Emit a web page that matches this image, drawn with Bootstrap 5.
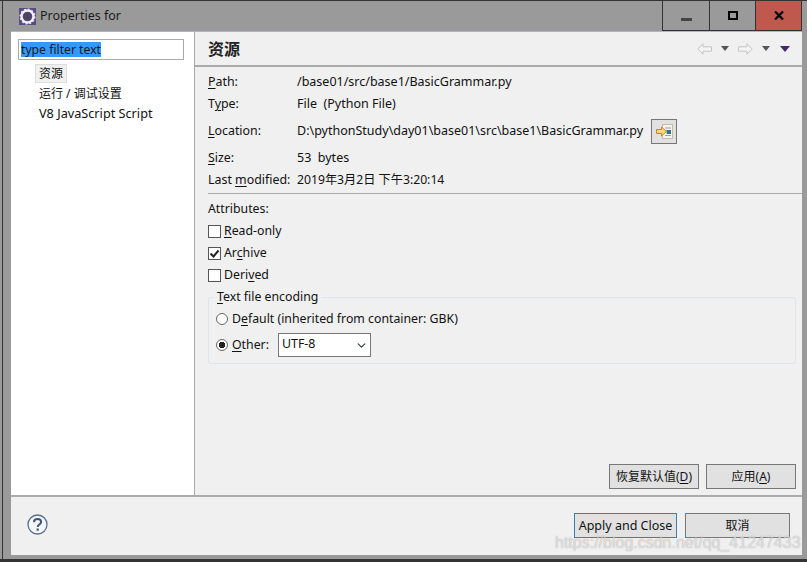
<!DOCTYPE html>
<html lang="zh">
<head>
<meta charset="utf-8">
<title>Properties for</title>
<link href="https://cdn.jsdelivr.net/npm/bootstrap@5.3.0/dist/css/bootstrap.min.css" rel="stylesheet">
<style>
html,body{height:100%;margin:0;overflow:hidden}
body{background:#9a9a9a;font-family:"Noto Sans","Noto Sans CJK SC",sans-serif;font-size:12.5px;color:#111;line-height:16px}
.win-shell{width:807px;height:562px;position:relative;border-top:1px solid #333;border-bottom:3px solid #333}
.win-edge{position:absolute;left:2px;top:0;bottom:0;width:1px;background:#333}
.title-strip{height:30px;padding-left:19px}
.title-name{font-size:12.5px;margin-left:4px;color:#1c1c1c}
.win-btns{margin-right:5px;height:30px;border:1px solid #333;border-top:0}
.win-btn{width:46px;height:100%;border-left:1px solid #333}
.win-btn:first-child{border-left:0}
.win-close{background:#c0594d}
.client{margin:0 5px 0 11px;height:524px;background:#f0f0f0;border-top:1px solid #a9b7c6}
.top-area{height:463px}
.side{width:184px;background:#fff;border-right:1px solid #a8a8a8;padding:7px 10px 0 7px}
.filter-box{height:21px;border:1px solid #aaa;border-radius:0;padding:2px 2px;font-size:12.2px;line-height:15px;color:#1a1a1a;background:#fff}
.filter-sel{background:#3399ff;display:inline-block;height:15px}
.tree{padding-left:17px;margin-top:4px;font-size:12px}
.tree-row{height:20px;line-height:20px;padding-left:4px;white-space:nowrap}
.tree-latin{font-size:12.7px;line-height:18px}
.tree-on{display:inline-block;margin-left:-4px;padding:0 3px;height:19px;line-height:17px;background:#f0f0f0;border:1px solid #ddd}
.main-pane{min-width:0}
.pane-head{height:35px;border-bottom:2px solid #aaa;padding:0 12px 0 13px}
.pane-title{font-size:16px;font-weight:700;color:#222}
.nav-arrows{gap:9px}
.nav-last{margin-left:1px}
.pane-body{padding:4px 6px 6px 13px}
.prop-row{height:22px}
.prop-row.tall{height:32px}
.prop-key{width:89px;flex:none;white-space:nowrap;font-size:12.4px}
.date-val{font-size:12.2px}
.loc-btn{width:26px;height:25px;border:1px solid #777;background:#e1e1e1;margin-left:8px;padding:0;border-radius:0}
.sep-line{border-top:1px solid #aaa;margin:2px -6px 4px 0;opacity:1}
.attr-row{height:22px;font-size:12.3px}
.attr-row .form-check-input{width:13px;height:13px;margin:0 3px 0 0;border:1px solid #555;border-radius:0;background-color:#fff;float:none}
.attr-row .form-check-input:checked{background-color:#fff;border-color:#555;background-image:url("data:image/svg+xml,%3csvg xmlns='http://www.w3.org/2000/svg' viewBox='0 0 13 13'%3e%3cpath d='M2.5 6.5l3 3 5-6' fill='none' stroke='%23222' stroke-width='2'/%3e%3c/svg%3e");background-size:13px}
.enc-box{border:1px solid #dde4ec;border-radius:3px;margin:11px 0 0;padding:10px 8px 6px 7px;height:67px;position:relative;font-size:12.3px}
.enc-legend{position:absolute;left:5px;top:-9px;background:#f0f0f0;padding:0 3px;line-height:16px}
.enc-radio{width:12px;height:12px;margin:0 4px 0 0;border:1px solid #666;background:#fff;float:none}
.enc-radio:checked{background-color:#fff;border-color:#666;background-image:radial-gradient(circle,#222 0,#222 3px,transparent 3.5px)}
.enc-row{height:22px}
.enc-row.two{height:30px}
.enc-select{width:93px;height:24px;border:1px solid #777;border-radius:0;margin-left:9px;padding:0 0 2px 3px;font-size:12.4px;line-height:16px;color:#111;background-color:#fff;background-size:11px 9px;background-position:right 3px center}
.flat-btn{background:#e1e1e1;border:1px solid #777;border-radius:0;padding:0;font-size:12px;line-height:16px;color:#111}
.flat-btn.pair{width:90px;height:25px}
.flat-btn.dlg{height:25px;width:105px}
.flat-btn.dflt{border-color:#3c7fb1;width:103px;font-size:12.5px}
.btn-pair{gap:7px}
.foot-area{height:60px;background:#f0f0f0;border-top:2px solid #aaa;padding:0 12px 0 16px}
.foot-inner{padding-top:16px}
.help-ico{margin-top:1px}
.wm-text{position:absolute;left:555px;top:533px;font-family:"Liberation Sans",sans-serif;font-size:16px;line-height:18px;color:rgba(255,255,255,.6);text-shadow:0 0 1px rgba(90,90,90,.55);white-space:nowrap;pointer-events:none}
u{text-underline-offset:2px}
</style>
</head>
<body>
<div class="win-shell d-flex flex-column">
  <div class="win-edge"></div>
  <div class="title-strip d-flex align-items-center">
    <svg width="17" height="17" viewBox="0 0 17 17"><rect width="17" height="17" fill="#5a4a86"/><circle cx="8.5" cy="8.5" r="6" fill="none" stroke="#f2f2f2" stroke-width="2.4"/><circle cx="8.5" cy="8.5" r="7.2" fill="none" stroke="#e8e8e8" stroke-width="1.6" stroke-dasharray="2 1.77"/><circle cx="8.5" cy="8.5" r="4" fill="#4b4560"/></svg>
    <span class="title-name">Properties for</span>
    <div class="win-btns d-flex ms-auto">
      <div class="win-btn d-flex align-items-center justify-content-center"><svg width="11" height="4" viewBox="0 0 11 4" class="mt-2"><rect width="11" height="3" fill="#444"/></svg></div>
      <div class="win-btn d-flex align-items-center justify-content-center"><svg width="10" height="9" viewBox="0 0 10 9"><rect x="1" y="1" width="8" height="7" fill="none" stroke="#000" stroke-width="2"/></svg></div>
      <div class="win-btn win-close d-flex align-items-center justify-content-center"><svg width="10" height="9" viewBox="0 0 10 9"><path d="M1 .5l8 8M9 .5l-8 8" stroke="#000" stroke-width="2.2"/></svg></div>
    </div>
  </div>
  <div class="client d-flex flex-column">
    <div class="top-area d-flex">
      <div class="side flex-shrink-0">
        <div class="filter-box"><span class="filter-sel">type filter text</span></div>
        <div class="tree">
          <div class="tree-row"><span class="tree-on">资源</span></div>
          <div class="tree-row">运行 / 调试设置</div>
          <div class="tree-row tree-latin">V8 JavaScript Script</div>
        </div>
      </div>
      <div class="main-pane flex-grow-1 d-flex flex-column">
        <div class="pane-head d-flex align-items-center">
          <span class="pane-title">资源</span>
          <div class="ms-auto d-flex align-items-center nav-arrows">
            <svg width="15" height="12" viewBox="0 0 15 12"><path d="M.8 6L6 .8v3h8.500v4.400H6v3z" fill="#f4f4f4" stroke="#c4c4c4"/></svg>
            <svg width="8" height="5" viewBox="0 0 8 5"><path d="M0 0h8L4 5z" fill="#555"/></svg>
            <svg width="15" height="12" viewBox="0 0 15 12"><path d="M14.200 6L9 .8v3H.5v4.400H9v3z" fill="#f4f4f4" stroke="#c4c4c4"/></svg>
            <svg width="8" height="5" viewBox="0 0 8 5"><path d="M0 0h8L4 5z" fill="#555"/></svg>
            <svg width="10" height="6" viewBox="0 0 10 6" class="nav-last"><path d="M0 0h10L5 6z" fill="#41286e"/></svg>
          </div>
        </div>
        <div class="pane-body flex-grow-1 d-flex flex-column">
          <div class="prop-row d-flex align-items-center"><span class="prop-key"><u>P</u>ath:</span><span>/base01/src/base1/BasicGrammar.py</span></div>
          <div class="prop-row d-flex align-items-center"><span class="prop-key">T<u>y</u>pe:</span><span>File&nbsp; (Python File)</span></div>
          <div class="prop-row tall d-flex align-items-center"><span class="prop-key"><u>L</u>ocation:</span><span>D:\pythonStudy\day01\base01\src\base1\BasicGrammar.py</span>
            <button class="btn loc-btn d-flex align-items-center justify-content-center" type="button" aria-label="Show in system explorer"><svg width="17" height="15" viewBox="0 0 17 15"><rect x="6.500" y=".5" width="10" height="14" fill="#f4f4f0" stroke="#c5bda0"/><path d="M9 4h6M9 6.500h6M10 9h5M9 11.500h6" stroke="#8aa0b8"/><rect x="11" y="6" width="4" height="4" fill="#2f6f9f"/><path d="M.5 5.500h5V3l5 4.500-5 4.500V9.500h-5z" fill="#f6d77e" stroke="#c68a14"/></svg></button>
          </div>
          <div class="prop-row d-flex align-items-center"><span class="prop-key"><u>S</u>ize:</span><span>53&nbsp; bytes</span></div>
          <div class="prop-row d-flex align-items-center"><span class="prop-key">Last <u>m</u>odified:</span><span class="date-val">2019年3月2日 下午3:20:14</span></div>
          <hr class="sep-line">
          <div class="attr-row d-flex align-items-center">Attributes:</div>
          <div class="attr-row d-flex align-items-center"><input class="form-check-input" type="checkbox" id="ro"><label for="ro"><u>R</u>ead-only</label></div>
          <div class="attr-row d-flex align-items-center"><input class="form-check-input" type="checkbox" id="ar" checked><label for="ar">Ar<u>c</u>hive</label></div>
          <div class="attr-row d-flex align-items-center"><input class="form-check-input" type="checkbox" id="de"><label for="de">Deri<u>v</u>ed</label></div>
          <div class="enc-box">
            <span class="enc-legend"><u>T</u>ext file encoding</span>
            <div class="enc-row d-flex align-items-center"><input class="form-check-input enc-radio" type="radio" name="enc" id="e1"><label for="e1">D<u>e</u>fault (inherited from container: GBK)</label></div>
            <div class="enc-row two d-flex align-items-center"><input class="form-check-input enc-radio" type="radio" name="enc" id="e2" checked><label for="e2"><u>O</u>ther:</label>
              <select class="form-select enc-select" aria-label="Encoding"><option>UTF-8</option></select>
            </div>
          </div>
          <div class="mt-auto d-flex justify-content-end btn-pair">
            <button class="btn flat-btn pair" type="button">恢复默认值(<u>D</u>)</button>
            <button class="btn flat-btn pair" type="button">应用(<u>A</u>)</button>
          </div>
        </div>
      </div>
    </div>
    <div class="foot-area d-flex flex-column">
      <div class="foot-inner d-flex align-items-start">
        <svg class="help-ico" width="21" height="21" viewBox="0 0 21 21"><circle cx="10.500" cy="10.500" r="9.500" fill="#f4f6f8" stroke="#5a6f8f" stroke-width="1.300"/><path d="M7 8.200c0-2 1.600-3.200 3.600-3.200s3.500 1.200 3.500 3c0 2.600-3.400 2.500-3.400 5" fill="none" stroke="#3f5478" stroke-width="2"/><rect x="9.600" y="14.500" width="2.200" height="2.200" fill="#3f5478"/></svg>
        <div class="ms-auto d-flex gap-2">
          <button class="btn flat-btn dlg dflt" type="button">Apply and Close</button>
          <button class="btn flat-btn dlg" type="button">取消</button>
        </div>
      </div>
    </div>
  </div>
  <span class="wm-text">https://blog.csdn.net/qq_41247433</span>
</div>
<script src="https://cdn.jsdelivr.net/npm/bootstrap@5.3.0/dist/js/bootstrap.bundle.min.js"></script>
</body>
</html>
